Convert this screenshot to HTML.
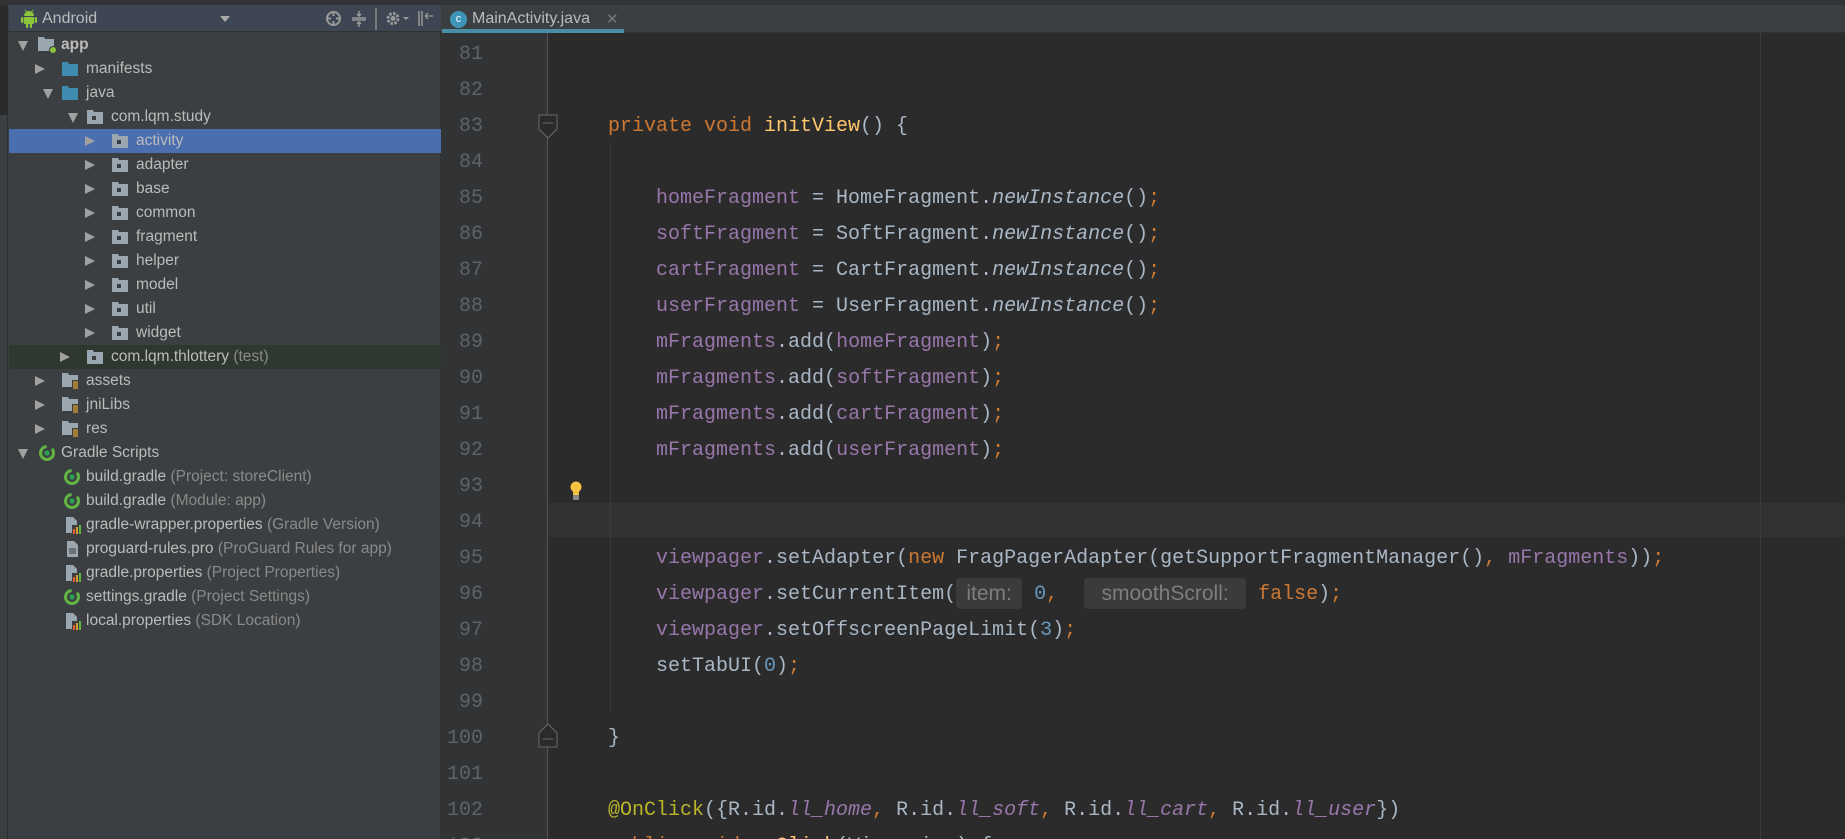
<!DOCTYPE html>
<html><head><meta charset="utf-8"><style>
*{margin:0;padding:0;box-sizing:border-box}
html{background:#2b2b2b;overflow:hidden}
body{width:1845px;height:839px;overflow:hidden;background:#2b2b2b;position:relative;font-family:"Liberation Sans","Noto Sans CJK SC",sans-serif}
.abs{position:absolute}
#strip{left:0;top:0;width:8px;height:839px;background:#3c3f41;border-right:1px solid #2b2b2b}
#side{left:8px;top:0;width:433px;height:839px;background:#3c3f41;border-right:1px solid #323232}
#topdark{left:0;top:0;width:1845px;height:5px;background:#313335}
#hdr{left:9px;top:5px;width:432px;height:27px;background:#3e4654;border-bottom:1px solid #323232;color:#bbb;font-size:16px}
.row{position:absolute;left:9px;width:432px;height:24px;color:#bbbbbb;font-size:15.5px;line-height:24px}
.row .t{position:absolute;top:0;white-space:nowrap}
.row .g{color:#8a8a8a}
.arr{position:absolute;top:7px;width:0;height:0}
.ar{border-top:5.5px solid transparent;border-bottom:5.5px solid transparent;border-left:10px solid #a0a0a0}
.ad{top:8px;border-left:5.5px solid transparent;border-right:5.5px solid transparent;border-top:10px solid #a0a0a0}
.ic{position:absolute;top:4px}
#tabbar{left:441px;top:5px;width:1404px;height:28px;background:#3c3f41;border-bottom:1px solid #323232}
#tab{left:442px;top:5px;width:182px;height:28px;background:#3c3f41;border-bottom:4px solid #4a8da8;color:#bbb;font-size:16px}
#gutter{left:441px;top:33px;width:107px;height:806px;background:#313335;border-right:1px solid #555}
.ln{position:absolute;left:441px;width:42px;text-align:right;color:#606366;font-family:"Liberation Mono",monospace;font-size:20px;height:36px;line-height:36px;margin-top:2px}
.cl{position:absolute;left:608px;height:36px;line-height:36px;font-family:"Liberation Mono",monospace;font-size:20px;color:#a9b7c6;white-space:pre;margin-top:2px}
.k{color:#cc7832}.f{color:#9876aa}.m{color:#ffc66d}.i{font-style:italic}.n{color:#6897bb}.a{color:#bbb529}
.fi{color:#9876aa;font-style:italic}
.hint{display:inline-block;background:#3b3b3b;color:#7e7e7e;font-family:"Liberation Sans",sans-serif;font-size:21px;line-height:31px;height:31px;border-radius:4px;text-align:center;vertical-align:middle}
</style></head><body>
<div id="strip" class="abs"></div>
<div class="abs" style="left:0;top:0;width:8px;height:115px;background:#2b2b2b"></div>
<div class="abs" style="left:9px;top:80px;width:4px;height:15px;background:#4b6eaf"></div>
<div id="side" class="abs"></div>
<div id="topdark" class="abs"></div>
<div id="hdr" class="abs">
 <svg class="abs" style="left:12px;top:4px" width="16" height="19" viewBox="0 0 16 19"><path d="M3 7a5 5 0 0 1 10 0z" fill="#8cc43b"/><rect x="3" y="8" width="10" height="7" rx="1" fill="#8cc43b"/><rect x="0" y="8" width="2.4" height="6" rx="1.2" fill="#8cc43b"/><rect x="13.6" y="8" width="2.4" height="6" rx="1.2" fill="#8cc43b"/><rect x="5" y="14" width="2.2" height="5" rx="1" fill="#8cc43b"/><rect x="8.8" y="14" width="2.2" height="5" rx="1" fill="#8cc43b"/><line x1="4" y1="1" x2="5.5" y2="3" stroke="#8cc43b"/><line x1="12" y1="1" x2="10.5" y2="3" stroke="#8cc43b"/></svg>
 <span class="abs" style="left:33px;top:5px">Android</span>
 <div class="abs" style="left:211px;top:11px;border-left:5px solid transparent;border-right:5px solid transparent;border-top:6px solid #aaa"></div>
 <svg class="abs" style="left:316px;top:5px" width="17" height="17"><circle cx="8.5" cy="8.5" r="6.5" fill="none" stroke="#9a9a9a" stroke-width="2"/><path d="M8.5 1v5M8.5 11v5M1 8.5h5M11 8.5h5" stroke="#9a9a9a" stroke-width="2"/></svg>
 <svg class="abs" style="left:342px;top:5px" width="16" height="18"><path d="M1 8h14M1 10h14M8 1v5M8 12v5M6 4l2 2 2-2M6 14l2-2 2 2" stroke="#999" fill="none" stroke-width="1.5"/></svg>
 <div class="abs" style="left:366px;top:3px;width:2px;height:22px;background:#777"></div>
 <svg class="abs" style="left:376px;top:5px" width="26" height="17"><circle cx="8" cy="8.5" r="5" fill="none" stroke="#9a9a9a" stroke-width="3" stroke-dasharray="2.5 1.4"/><circle cx="8" cy="8.5" r="2.5" fill="#9a9a9a"/><path d="M18 7h6l-3 3z" fill="#9a9a9a"/></svg>
 <svg class="abs" style="left:408px;top:5px" width="16" height="17"><path d="M2 1v15M5 1v15" stroke="#999" stroke-width="1.5"/><path d="M8 6h8M8 6l3-3M8 6l3 3" stroke="#999" stroke-width="1.3" fill="none"/></svg>
</div>
<div class="abs" style="left:9px;top:129px;width:432px;height:24px;background:#4b6eaf"></div>
<div class="abs" style="left:9px;top:345px;width:432px;height:24px;background:#2f382e"></div>

<svg width="0" height="0" style="position:absolute"><defs>
<g id="fb"><path d="M0 1h6l1 2h9v12H0z" fill="#3f8cb0"/></g>
<g id="fp"><path d="M0 1h6l1 2h9v12H0z" fill="#9aa7b0"/><rect x="5" y="7" width="4" height="4" fill="#3c3f41"/></g>
<g id="fr"><path d="M0 1h6l1 2h9v12H0z" fill="#9aa7b0"/><rect x="10" y="8" width="7" height="9" fill="#3c3f41"/><path d="M11 10h5M11 12h5M11 14h5M11 16h5" stroke="#e0a030" stroke-width="1.2"/></g>
<g id="gr"><circle cx="9" cy="9" r="6.5" fill="none" stroke="#62b543" stroke-width="3" stroke-dasharray="30 6"/><circle cx="9" cy="9" r="2.6" fill="#2aa155"/></g>
<g id="pr"><path d="M2 1h7l4 4v12H2z" fill="#9aa7b0"/><rect x="8" y="9" width="9" height="9" fill="#3c3f41"/><rect x="9" y="13" width="2" height="5" fill="#e8632c"/><rect x="12" y="11" width="2" height="7" fill="#e0a030"/><rect x="15" y="9" width="2" height="9" fill="#62b543"/></g>
<g id="tx"><path d="M3 1h7l4 4v12H3z" fill="#9aa7b0"/><path d="M5 9h7M5 11h7M5 13h7" stroke="#3c3f41" stroke-width="1"/></g>
</defs></svg>

<div class="row" style="top:33px"><div class="arr ad" style="left:9px"></div><svg class="ic" style="left:29px;top:3px" width="20" height="19"><path d="M0 1h6l1 2h9v12H0z" fill="#9aa7b0"/><circle cx="15" cy="14" r="4" fill="#3c3f41"/><circle cx="15" cy="14" r="3" fill="#8cc43b"/></svg><span class="t" style="left:52px;font-weight:bold">app</span></div>
<div class="row" style="top:57px"><div class="arr ar" style="left:26px"></div><svg class="ic" style="left:53px" width="18" height="18"><use href="#fb"/></svg><span class="t" style="left:77px">manifests</span></div>
<div class="row" style="top:81px"><div class="arr ad" style="left:34px"></div><svg class="ic" style="left:53px" width="18" height="18"><use href="#fb"/></svg><span class="t" style="left:77px">java</span></div>
<div class="row" style="top:105px"><div class="arr ad" style="left:59px"></div><svg class="ic" style="left:78px" width="18" height="18"><use href="#fp"/></svg><span class="t" style="left:102px">com.lqm.study</span></div>
<div class="row" style="top:129px"><div class="arr ar" style="left:76px"></div><svg class="ic" style="left:103px" width="18" height="18"><use href="#fp"/></svg><span class="t" style="left:127px">activity</span></div>
<div class="row" style="top:153px"><div class="arr ar" style="left:76px"></div><svg class="ic" style="left:103px" width="18" height="18"><use href="#fp"/></svg><span class="t" style="left:127px">adapter</span></div>
<div class="row" style="top:177px"><div class="arr ar" style="left:76px"></div><svg class="ic" style="left:103px" width="18" height="18"><use href="#fp"/></svg><span class="t" style="left:127px">base</span></div>
<div class="row" style="top:201px"><div class="arr ar" style="left:76px"></div><svg class="ic" style="left:103px" width="18" height="18"><use href="#fp"/></svg><span class="t" style="left:127px">common</span></div>
<div class="row" style="top:225px"><div class="arr ar" style="left:76px"></div><svg class="ic" style="left:103px" width="18" height="18"><use href="#fp"/></svg><span class="t" style="left:127px">fragment</span></div>
<div class="row" style="top:249px"><div class="arr ar" style="left:76px"></div><svg class="ic" style="left:103px" width="18" height="18"><use href="#fp"/></svg><span class="t" style="left:127px">helper</span></div>
<div class="row" style="top:273px"><div class="arr ar" style="left:76px"></div><svg class="ic" style="left:103px" width="18" height="18"><use href="#fp"/></svg><span class="t" style="left:127px">model</span></div>
<div class="row" style="top:297px"><div class="arr ar" style="left:76px"></div><svg class="ic" style="left:103px" width="18" height="18"><use href="#fp"/></svg><span class="t" style="left:127px">util</span></div>
<div class="row" style="top:321px"><div class="arr ar" style="left:76px"></div><svg class="ic" style="left:103px" width="18" height="18"><use href="#fp"/></svg><span class="t" style="left:127px">widget</span></div>
<div class="row" style="top:345px"><div class="arr ar" style="left:51px"></div><svg class="ic" style="left:78px" width="18" height="18"><use href="#fp"/></svg><span class="t" style="left:102px">com.lqm.thlottery <span class="g">(test)</span></span></div>
<div class="row" style="top:369px"><div class="arr ar" style="left:26px"></div><svg class="ic" style="left:53px;top:3px" width="20" height="20"><use href="#fr"/></svg><span class="t" style="left:77px">assets</span></div>
<div class="row" style="top:393px"><div class="arr ar" style="left:26px"></div><svg class="ic" style="left:53px;top:3px" width="20" height="20"><use href="#fr"/></svg><span class="t" style="left:77px">jniLibs</span></div>
<div class="row" style="top:417px"><div class="arr ar" style="left:26px"></div><svg class="ic" style="left:53px;top:3px" width="20" height="20"><use href="#fr"/></svg><span class="t" style="left:77px">res</span></div>
<div class="row" style="top:441px"><div class="arr ad" style="left:9px"></div><svg class="ic" style="left:29px;top:3px" width="18" height="18"><use href="#gr"/></svg><span class="t" style="left:52px">Gradle Scripts</span></div>
<div class="row" style="top:465px"><svg class="ic" style="left:54px;top:3px" width="18" height="18"><use href="#gr"/></svg><span class="t" style="left:77px">build.gradle <span class="g">(Project: storeClient)</span></span></div>
<div class="row" style="top:489px"><svg class="ic" style="left:54px;top:3px" width="18" height="18"><use href="#gr"/></svg><span class="t" style="left:77px">build.gradle <span class="g">(Module: app)</span></span></div>
<div class="row" style="top:513px"><svg class="ic" style="left:55px;top:3px" width="18" height="19"><use href="#pr"/></svg><span class="t" style="left:77px">gradle-wrapper.properties <span class="g">(Gradle Version)</span></span></div>
<div class="row" style="top:537px"><svg class="ic" style="left:55px;top:3px" width="18" height="19"><use href="#tx"/></svg><span class="t" style="left:77px">proguard-rules.pro <span class="g">(ProGuard Rules for app)</span></span></div>
<div class="row" style="top:561px"><svg class="ic" style="left:55px;top:3px" width="18" height="19"><use href="#pr"/></svg><span class="t" style="left:77px">gradle.properties <span class="g">(Project Properties)</span></span></div>
<div class="row" style="top:585px"><svg class="ic" style="left:54px;top:3px" width="18" height="18"><use href="#gr"/></svg><span class="t" style="left:77px">settings.gradle <span class="g">(Project Settings)</span></span></div>
<div class="row" style="top:609px"><svg class="ic" style="left:55px;top:3px" width="18" height="19"><use href="#pr"/></svg><span class="t" style="left:77px">local.properties <span class="g">(SDK Location)</span></span></div>

<div id="tabbar" class="abs"></div>
<div id="tab" class="abs">
 <div class="abs" style="left:8px;top:6px;width:17px;height:17px;border-radius:50%;background:#3e94b8;color:#fff;font-size:11px;line-height:17px;text-align:center">c</div>
 <span class="abs" style="left:30px;top:5px">MainActivity.java</span>
 <span class="abs" style="left:164px;top:5px;color:#777;font-size:15px">✕</span>
</div>
<div id="gutter" class="abs"></div>
<div class="abs" style="left:549px;top:503px;width:1296px;height:34px;background:#323232"></div>
<div class="abs" style="left:1760px;top:33px;width:1px;height:806px;background:#3a3a3a"></div>
<div class="abs" style="left:610px;top:143px;width:1px;height:568px;background:#3b3b3b"></div>
<svg class="abs" style="left:538px;top:114px" width="21" height="26"><path d="M1 1h18v14l-9 9-9-9z" fill="#2b2b2b" stroke="#6a6a6a"/><path d="M5 9h10" stroke="#6a6a6a"/></svg>
<svg class="abs" style="left:538px;top:722px" width="21" height="26"><path d="M1 25h18V11l-9-9-9 9z" fill="#2b2b2b" stroke="#6a6a6a"/><path d="M5 17h10" stroke="#6a6a6a"/></svg>
<svg class="abs" style="left:570px;top:481px" width="12" height="20"><circle cx="6" cy="6" r="5.5" fill="#f5c341"/><rect x="3" y="10" width="6" height="4" fill="#f5c341"/><rect x="3" y="14" width="6" height="5" rx="1" fill="#8a8a8a"/></svg>

<div class="ln" style="top:35px">81</div>
<div class="ln" style="top:71px">82</div>
<div class="ln" style="top:107px">83</div>
<div class="ln" style="top:143px">84</div>
<div class="ln" style="top:179px">85</div>
<div class="ln" style="top:215px">86</div>
<div class="ln" style="top:251px">87</div>
<div class="ln" style="top:287px">88</div>
<div class="ln" style="top:323px">89</div>
<div class="ln" style="top:359px">90</div>
<div class="ln" style="top:395px">91</div>
<div class="ln" style="top:431px">92</div>
<div class="ln" style="top:467px">93</div>
<div class="ln" style="top:503px">94</div>
<div class="ln" style="top:539px">95</div>
<div class="ln" style="top:575px">96</div>
<div class="ln" style="top:611px">97</div>
<div class="ln" style="top:647px">98</div>
<div class="ln" style="top:683px">99</div>
<div class="ln" style="top:719px">100</div>
<div class="ln" style="top:755px">101</div>
<div class="ln" style="top:791px">102</div>
<div class="ln" style="top:827px">103</div>

<div class="cl" style="top:107px"><span class="k">private void </span><span class="m">initView</span>() {</div>
<div class="cl" style="top:179px">    <span class="f">homeFragment</span> = HomeFragment.<span class="i">newInstance</span>()<span class="k">;</span></div>
<div class="cl" style="top:215px">    <span class="f">softFragment</span> = SoftFragment.<span class="i">newInstance</span>()<span class="k">;</span></div>
<div class="cl" style="top:251px">    <span class="f">cartFragment</span> = CartFragment.<span class="i">newInstance</span>()<span class="k">;</span></div>
<div class="cl" style="top:287px">    <span class="f">userFragment</span> = UserFragment.<span class="i">newInstance</span>()<span class="k">;</span></div>
<div class="cl" style="top:323px">    <span class="f">mFragments</span>.add(<span class="f">homeFragment</span>)<span class="k">;</span></div>
<div class="cl" style="top:359px">    <span class="f">mFragments</span>.add(<span class="f">softFragment</span>)<span class="k">;</span></div>
<div class="cl" style="top:395px">    <span class="f">mFragments</span>.add(<span class="f">cartFragment</span>)<span class="k">;</span></div>
<div class="cl" style="top:431px">    <span class="f">mFragments</span>.add(<span class="f">userFragment</span>)<span class="k">;</span></div>
<div class="cl" style="top:539px">    <span class="f">viewpager</span>.setAdapter(<span class="k">new </span>FragPagerAdapter(getSupportFragmentManager()<span class="k">, </span><span class="f">mFragments</span>))<span class="k">;</span></div>
<div class="cl" style="top:575px">    <span class="f">viewpager</span>.setCurrentItem(<span class="hint" style="width:66px">item:</span><span class="n"> 0</span><span class="k">, </span><span class="hint" style="width:162px;margin-left:14px">smoothScroll:</span> <span class="k">false</span>)<span class="k">;</span></div>
<div class="cl" style="top:611px">    <span class="f">viewpager</span>.setOffscreenPageLimit(<span class="n">3</span>)<span class="k">;</span></div>
<div class="cl" style="top:647px">    setTabUI(<span class="n">0</span>)<span class="k">;</span></div>
<div class="cl" style="top:719px">}</div>
<div class="cl" style="top:791px"><span class="a">@OnClick</span>({R.id.<span class="fi">ll_home</span><span class="k">, </span>R.id.<span class="fi">ll_soft</span><span class="k">, </span>R.id.<span class="fi">ll_cart</span><span class="k">, </span>R.id.<span class="fi">ll_user</span>})</div>
<div class="cl" style="top:827px"><span class="k">public void </span><span class="m">onClick</span>(View view) {</div>
</body></html>
